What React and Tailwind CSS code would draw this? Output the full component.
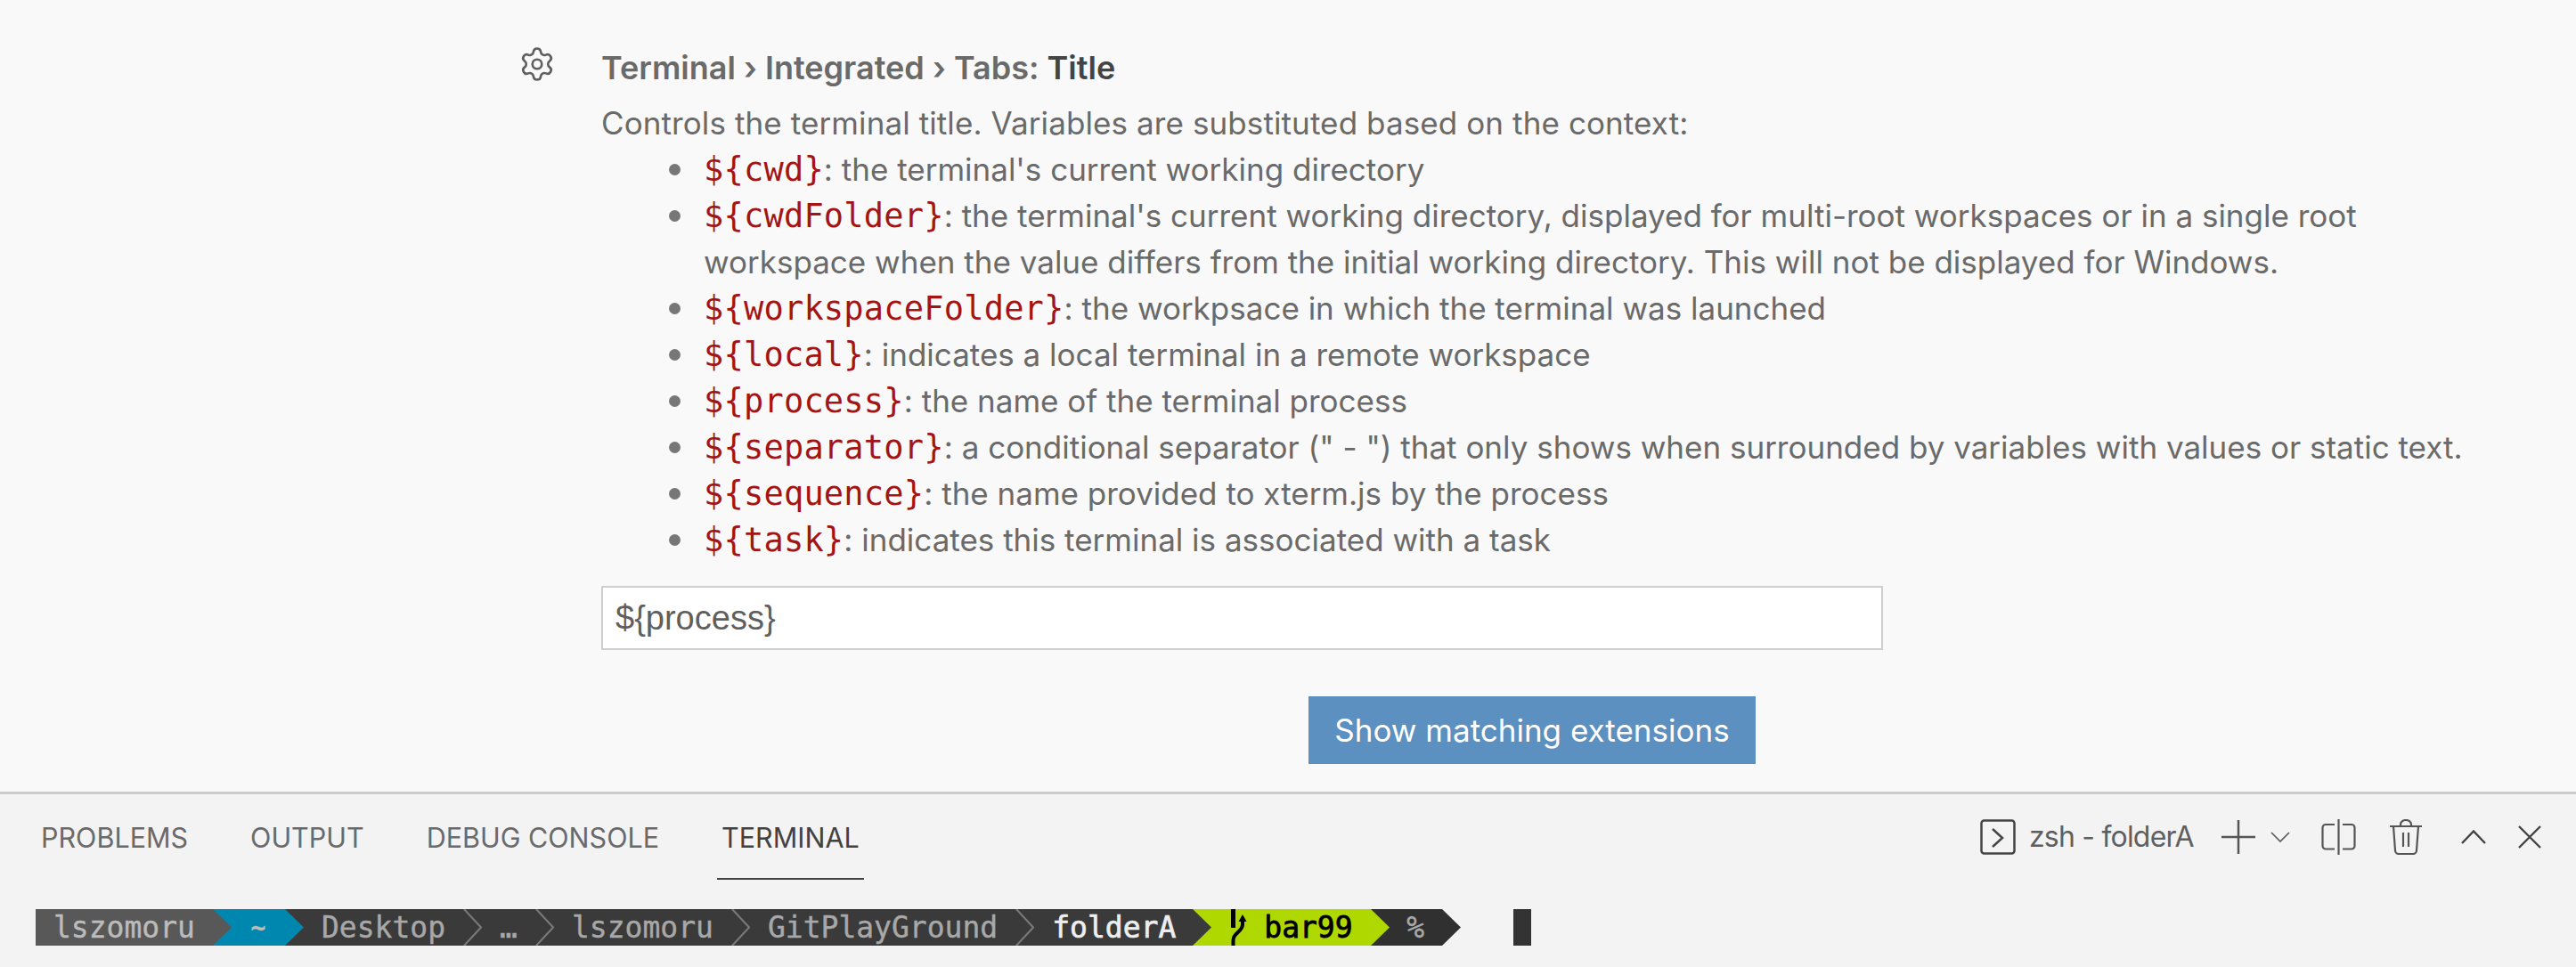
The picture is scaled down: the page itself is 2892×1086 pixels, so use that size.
import React from 'react';
import { Settings } from 'lucide-react';

const vars = [
    { name: '${cwd}', text: ": the terminal's current working directory" },
    { name: '${cwdFolder}', text: ": the terminal's current working directory, displayed for multi-root workspaces or in a single root", more: 'workspace when the value differs from the initial working directory. This will not be displayed for Windows.' },
    { name: '${workspaceFolder}', text: ': the workpsace in which the terminal was launched' },
    { name: '${local}', text: ': indicates a local terminal in a remote workspace' },
    { name: '${process}', text: ': the name of the terminal process' },
    { name: '${separator}', text: ': a conditional separator (" - ") that only shows when surrounded by variables with values or static text.' },
    { name: '${sequence}', text: ': the name provided to xterm.js by the process' },
    { name: '${task}', text: ': indicates this terminal is associated with a task' },
];

const Arrow = ({ fill, bg }) => (
    <svg width="21" height="41" viewBox="0 0 21 41" className="shrink-0 block" style={{ background: bg }}>
        <path d="M0 0 L21 20.5 L0 41 Z" fill={fill} />
    </svg>
);

const Sep = () => (
    <svg width="21" height="41" viewBox="0 0 21 41" className="shrink-0 block mx-[20px]">
        <path d="M1 0 L20 20.5 L1 41" fill="none" stroke="#7a7a7a" strokeWidth="2" />
    </svg>
);

const App = () => {
    return (
        <div className="w-[2892px] h-[1086px] flex flex-col overflow-hidden bg-[#f9f9f9] text-[#6a6a6a] font-['Inter',sans-serif]">
            <div className="flex-1 flex pl-[582px] pt-[51px]">
                <Settings className="w-[42px] h-[42px] text-[#5f5f5f] shrink-0" strokeWidth={1.5} />
                <div className="ml-[51px] flex-1">
                    <div className="text-[36px] leading-[52px] font-semibold h-[52px] -mt-[1px]">
                        Terminal › Integrated › Tabs: <span className="text-[#444]">Title</span>
                    </div>
                    <div className="text-[35px] leading-[52px] mt-[10px] whitespace-nowrap">
                        <p className="tracking-[0.1px]">Controls the terminal title. Variables are substituted based on the context:</p>
                        <ul>
                            {vars.map((v) => (
                                <li key={v.name} className="flex">
                                    <span className="w-[13px] h-[13px] rounded-full bg-[#777] mt-[20px] ml-[76px] mr-[26px] shrink-0" />
                                    <div>
                                        <span className="font-['DejaVu_Sans_Mono',monospace] text-[#a31515] text-[37px] leading-none tracking-[0.2px]">{v.name}</span>
                                        {v.text}
                                        {v.more && <div>{v.more}</div>}
                                    </div>
                                </li>
                            ))}
                        </ul>
                    </div>
                    <div className="w-[1439px] h-[72px] mt-[26px] bg-white border-2 border-[#cecece] flex items-center pl-[14px] text-[38px] text-[#5f5f5f] font-['Liberation_Sans',sans-serif]">
                        {'${process}'}
                    </div>
                    <div className="w-[502px] h-[76px] mt-[52px] ml-[794px] bg-[#5b90c0] text-white flex items-center justify-center text-[35px]">
                        Show matching extensions
                    </div>
                </div>
            </div>

            <div className="h-[197px] shrink-0 border-t-[3px] border-[#cccccc] bg-[#f3f3f3]">
                <div className="h-[96px] flex items-start pl-[46px] pr-[39px] text-[30.5px]">
                    <div className="mt-[29px] leading-[40px]">PROBLEMS</div>
                    <div className="mt-[29px] leading-[40px] ml-[70px]">OUTPUT</div>
                    <div className="mt-[29px] leading-[40px] ml-[70px]">DEBUG CONSOLE</div>
                    <div className="mt-[29px] ml-[65px] text-[#424242]">
                        <div className="leading-[40px] px-[5px]">TERMINAL</div>
                        <div className="h-[2px] bg-[#424242] mt-[25px]" />
                    </div>

                    <div className="ml-auto flex items-center mt-[28px] h-[40px] text-[#5f5f5f]">
                        <svg width="40" height="40" viewBox="0 0 40 40" fill="none" stroke="#444" strokeWidth="2.5">
                            <rect x="1.5" y="1.5" width="37" height="37" rx="3" />
                            <path d="M14 11 L25 21 L14 31" />
                        </svg>
                        <div className="ml-[15px] w-[184px] text-[32px] tracking-[-0.8px] whitespace-nowrap">zsh - folderA</div>
                        <svg width="38" height="38" viewBox="0 0 38 38" fill="none" stroke="#555" strokeWidth="2.5" className="ml-[32px]">
                            <path d="M19 0 V38 M0 19 H38" />
                        </svg>
                        <svg width="22" height="12" viewBox="0 0 22 12" fill="none" stroke="#555" strokeWidth="1.6" className="ml-[17px]">
                            <path d="M1 1 L11 11 L21 1" />
                        </svg>
                        <svg width="39" height="40" viewBox="0 0 39 40" fill="none" stroke="#555" strokeWidth="2.2" className="ml-[35px]">
                            <path d="M15 6 H5 a3.5 3.5 0 0 0 -3.5 3.5 V30 a3.5 3.5 0 0 0 3.5 3.5 H15" />
                            <path d="M24 6 H34 a3.5 3.5 0 0 1 3.5 3.5 V30 a3.5 3.5 0 0 1 -3.5 3.5 H24" />
                            <path d="M19.5 0 V40" />
                        </svg>
                        <svg width="36" height="40" viewBox="0 0 36 40" fill="none" stroke="#555" strokeWidth="2.2" className="ml-[38px]">
                            <path d="M0 8 H36" />
                            <path d="M12 8 V6 a6 5 0 0 1 12 0 V8" />
                            <path d="M4 8 L6 35 a4 4 0 0 0 4 4 H26 a4 4 0 0 0 4 -4 L32 8" />
                            <path d="M15 15 V31 M21 15 V31" />
                        </svg>
                        <svg width="28" height="16" viewBox="0 0 28 16" fill="none" stroke="#424242" strokeWidth="2.4" className="ml-[44px]">
                            <path d="M1 15 L14 1.5 L27 15" />
                        </svg>
                        <svg width="26" height="26" viewBox="0 0 26 26" fill="none" stroke="#424242" strokeWidth="2.4" className="ml-[36px]">
                            <path d="M1 1 L25 25 M25 1 L1 25" />
                        </svg>
                    </div>
                </div>

                <div className="flex items-center mt-[33px] pl-[40px] h-[41px] font-['DejaVu_Sans_Mono',monospace] text-[33px] leading-[41px] [-webkit-text-stroke:0.4px]">
                    <div className="bg-[#585858] text-[#bcbcbc] px-[20px] w-[199px] h-[41px]">lszomoru</div>
                    <Arrow fill="#585858" bg="#0087af" />
                    <div className="bg-[#0087af] text-[#bcbcbc] w-[60px] h-[41px] text-center text-[28px] font-bold">~</div>
                    <Arrow fill="#0087af" bg="#3a3a3a" />
                    <div className="bg-[#3a3a3a] text-[#a8a8a8] h-[41px] flex pl-[20px]">
                        <span>Desktop</span>
                        <Sep />
                        <span>…</span>
                        <Sep />
                        <span>lszomoru</span>
                        <Sep />
                        <span>GitPlayGround</span>
                        <Sep />
                        <span className="text-[#eeeeee] pr-[19px] [-webkit-text-stroke:0.7px]">folderA</span>
                    </div>
                    <Arrow fill="#3a3a3a" bg="#afd700" />
                    <div className="bg-[#afd700] text-black h-[41px] w-[179px] flex items-center pl-[20px] [-webkit-text-stroke:0.8px]">
                        <svg width="20" height="41" viewBox="0 0 20 41" fill="none" stroke="#000" strokeWidth="5" className="shrink-0 mr-[19px]">
                            <path d="M4.5 0 V21" />
                            <path d="M15 13 V17 C15 26 4.5 26 4.5 35 V41" strokeWidth="4" />
                            <path d="M15 6 L19.5 14 H10.5 Z" fill="#000" stroke="none" />
                        </svg>
                        <span>bar99</span>
                    </div>
                    <Arrow fill="#afd700" bg="#303030" />
                    <div className="bg-[#303030] text-[#a8a8a8] h-[41px] w-[59px] pl-[19px]">%</div>
                    <Arrow fill="#303030" bg="#f3f3f3" />
                    <div className="w-[20px] h-[41px] bg-[#333333] ml-[59px]" />
                </div>
            </div>
        </div>
    );
};

export default App;
